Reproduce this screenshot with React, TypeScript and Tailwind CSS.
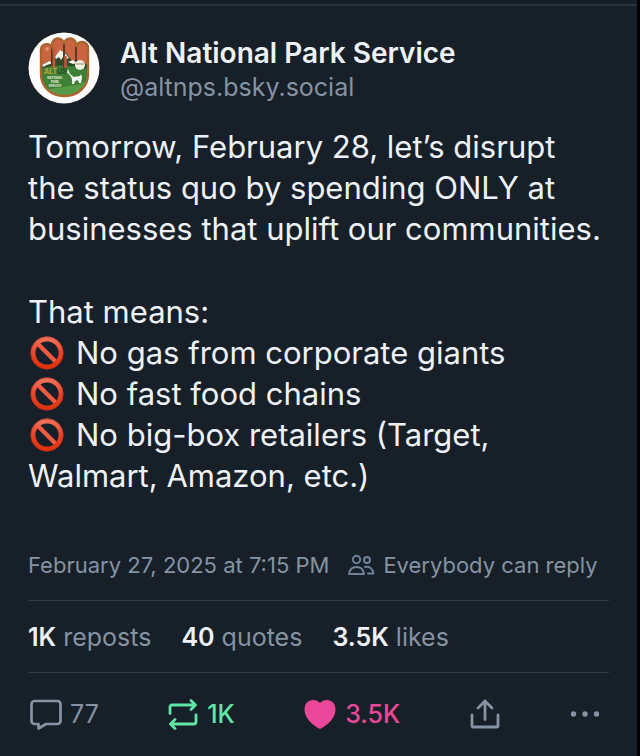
import type { ReactNode } from "react";

const banned = ["No gas from corporate giants", "No fast food chains"];

const stats = [
  { value: "1K", label: "reposts" },
  { value: "40", label: "quotes" },
  { value: "3.5K", label: "likes" },
];

const handPath =
  "M13 17a6 6 0 0 1 11-2V13a6 6 0 0 1 12-1 6 6 0 0 1 12 1v2a6 6 0 0 1 12 2v25c0 13-10 22-23.500 22S13 55 13 42Z";

function Avatar() {
  return (
    <svg viewBox="0 0 72 72" className="size-18 shrink-0" role="img" aria-label="Alt National Park Service">
      <defs>
        <clipPath id="hand">
          <path d={handPath} />
        </clipPath>
      </defs>
      <circle cx="36" cy="36" r="35.500" fill="#fdfdfd" />
      <g clipPath="url(#hand)">
        <rect width="72" height="72" fill="#cb6440" />
        <path d="M12 34l8-5 5 1 8-12 5 3 6 8 8-1 9 6v6H12Z" fill="#2f4a2b" />
        <path d="M27 25l5-7 4 2 5 6-3 1-3-2-2 3-2-3-3 2ZM14 33l7-4 5 2-4 1-3 1-4 2ZM40 30l5-2 4 3-4 1Z" fill="#eef3e8" />
        <path d="M12 37c14-5 30-4 48 0v30H12Z" fill="#3d8036" />
        <path d="M12 58c13-1 25-3 40-6l8-4v20H12Z" fill="#559a45" />
        <path d="M24 13v21M36 11v25M48 13v17" stroke="#5e3a22" strokeWidth="2" />
        <path d="M26 15v22M37.500 24v12" stroke="#c05a38" strokeWidth="2.500" />
        <circle cx="19" cy="17" r="1.800" fill="#e69a78" />
      </g>
      <path d={handPath} fill="none" stroke="#a9652c" strokeWidth="2.400" />
      <circle cx="52" cy="33" r="5" fill="#f1f0dd" />
      <path d="M48 32h8" stroke="#8b8c68" />
      <path d="M40 37l2 5 4 3 6-1 1-2 1 3-1 6h-2l-1-3-3 1-1 3h-2v-5l-3-5-2-1Z" fill="#f3f7ef" />
      <text x="16" y="42" fontSize="7" fontWeight="700" fontFamily="Inter, sans-serif" fill="#c7a338">
        ALT<tspan fill="#1f4a25">US</tspan>
      </text>
      <g fontSize="3" fontWeight="700" fontFamily="Inter, sans-serif" fill="#e5ecd6" textAnchor="middle">
        <text x="27" y="47">NATIONAL</text>
        <text x="27" y="51">PARK</text>
        <text x="27" y="55">SERVICE</text>
      </g>
    </svg>
  );
}

function NoEntry() {
  return (
    <svg viewBox="0 0 34 34" className="mr-3 ml-0.5 inline-block size-[34px] align-[-6px]" role="img" aria-label="Prohibited">
      <defs>
        <linearGradient id="ring" x1="0" y1="0" x2="0" y2="1">
          <stop offset="0" stopColor="#f0705a" />
          <stop offset="0.500" stopColor="#ea4428" />
          <stop offset="1" stopColor="#e0330f" />
        </linearGradient>
      </defs>
      <path d="M7.500 7.500l19 19" stroke="#f05a40" strokeWidth="4.500" />
      <circle cx="17" cy="17" r="14" fill="none" stroke="url(#ring)" strokeWidth="4.800" />
      <circle cx="17" cy="17" r="16.200" fill="none" stroke="#b02c14" strokeWidth="0.600" />
    </svg>
  );
}

function PeopleIcon() {
  return (
    <svg viewBox="0 0 28 24" className="h-6 w-7 shrink-0" fill="none" stroke="#6f8299" strokeWidth="2" strokeLinejoin="round" strokeLinecap="round" aria-hidden="true">
      <circle cx="9.500" cy="6.500" r="3.700" />
      <circle cx="20" cy="7" r="3" />
      <path d="M2 21c.5-4.500 3.500-7 7.500-7s7 2.500 7.500 7Z" />
      <path d="M18 14c4-1 8 1.500 8.500 6.500H21" />
    </svg>
  );
}

function ReplyIcon() {
  return (
    <svg viewBox="0 0 34 32" className="h-8 w-[34px]" fill="none" stroke="currentColor" strokeWidth="2.700" strokeLinejoin="round" aria-hidden="true">
      <path d="M6.500 3h23a3 3 0 0 1 3 3v17a3 3 0 0 1-3 3H18l-7.500 4.500V26h-4a3 3 0 0 1-3-3V6a3 3 0 0 1 3-3Z" />
    </svg>
  );
}

function RepostIcon() {
  return (
    <svg viewBox="0 0 32 32" className="size-8" fill="none" stroke="currentColor" strokeWidth="2.800" strokeLinecap="round" strokeLinejoin="round" aria-hidden="true">
      <path d="M3 15.500V9a2 2 0 0 1 2-2h23M24 2.500L28.500 7 24 11.500" />
      <path d="M29 17v7a2 2 0 0 1-2 2H4M8 21.500L3.500 26 8 30.500" />
    </svg>
  );
}

function HeartIcon() {
  return (
    <svg viewBox="0 0 34 32" className="h-8 w-[34px]" fill="currentColor" aria-hidden="true">
      <path d="M17 31C11 28 1.500 21 1.500 11.500 1.500 5.500 5.500 2 10 2c3 0 5.500 1.200 7 3 1.500-1.800 4-3 7-3 4.500 0 8.500 3.500 8.500 9.500C32.500 21 23 28 17 31Z" />
    </svg>
  );
}

function ShareIcon() {
  return (
    <svg viewBox="0 0 32 32" className="size-8" fill="none" stroke="currentColor" strokeWidth="2.800" strokeLinecap="round" strokeLinejoin="round" aria-hidden="true">
      <path d="M3 17v11a1 1 0 0 0 1 1h24a1 1 0 0 0 1-1V17M16 21.500V3M9 10l7-7 7 7" />
    </svg>
  );
}

function MoreIcon() {
  return (
    <svg viewBox="0 0 32 32" className="size-8" fill="currentColor" aria-hidden="true">
      <circle cx="4.500" cy="16" r="2.700" />
      <circle cx="16" cy="16" r="2.700" />
      <circle cx="27.500" cy="16" r="2.700" />
    </svg>
  );
}

function Action({ label, className, children }: { label: string; className?: string; children: ReactNode }) {
  return (
    <button type="button" aria-label={label} className={`flex items-center gap-2 ${className ?? ""}`}>
      {children}
    </button>
  );
}

export default function App() {
  return (
    <div className="min-h-screen bg-black pr-[3px] font-['Inter',sans-serif]">
      <div className="min-h-screen bg-[#171f28] pt-1">
        <article className="border-t-2 border-[#27323f] px-7 pt-[26px]">
          <header className="flex items-center gap-5">
            <a href="#profile" className="shrink-0">
              <Avatar />
            </a>
            <div className="pt-0.5">
              <h1 className="text-[28px] leading-9 font-semibold text-[#eef2f6]">Alt National Park Service</h1>
              <a href="#profile" className="block text-[25px] leading-8 text-[#8593a3]">
                @altnps.bsky.social
              </a>
            </div>
          </header>

          {/* Post text */}
          <div className="mt-[22px] text-[31px] leading-[41px] text-[#eef2f6]">
            <p>
              Tomorrow, February 28, let’s disrupt
              <br />
              the status quo by spending ONLY at
              <br />
              <span className="whitespace-nowrap">businesses that uplift our communities.</span>
            </p>
            <p className="mt-[42px]">That means:</p>
            {banned.map((item) => (
              <p key={item}>
                <NoEntry />
                {item}
              </p>
            ))}
            <p>
              <NoEntry />
              No big-box retailers (Target,
              <br />
              Walmart, Amazon, etc.)
            </p>
          </div>

          <div className="mt-[53px] flex items-center gap-[18px] pb-[19px] text-[22px] leading-8 whitespace-nowrap text-[#8593a3]">
            <time dateTime="2025-02-27T19:15">February 27, 2025 at 7:15 PM</time>
            <button type="button" className="flex items-center gap-2">
              <PeopleIcon />
              Everybody can reply
            </button>
          </div>

          <div className="flex gap-[30px] border-y border-[#303b47] pt-5 pb-[19px] text-[25px] leading-8 text-[#8593a3]">
            {stats.map((stat) => (
              <a key={stat.label} href={`#${stat.label}`}>
                <span className="font-semibold text-[#eef2f6]">{stat.value}</span> {stat.label}
              </a>
            ))}
          </div>

          {/* Actions */}
          <div className="flex items-center justify-between pt-[25px] pr-2 pb-4 text-[25px] leading-8 text-[#8593a3]">
            <Action label="Reply, 77 replies">
              <ReplyIcon />
              77
            </Action>
            <Action label="Undo repost" className="font-medium text-[#5de6a4]">
              <RepostIcon />
              1K
            </Action>
            <Action label="Unlike" className="font-medium text-[#ec4899]">
              <HeartIcon />
              3.5K
            </Action>
            <Action label="Share">
              <ShareIcon />
            </Action>
            <Action label="More options">
              <MoreIcon />
            </Action>
          </div>
        </article>
      </div>
    </div>
  );
}
